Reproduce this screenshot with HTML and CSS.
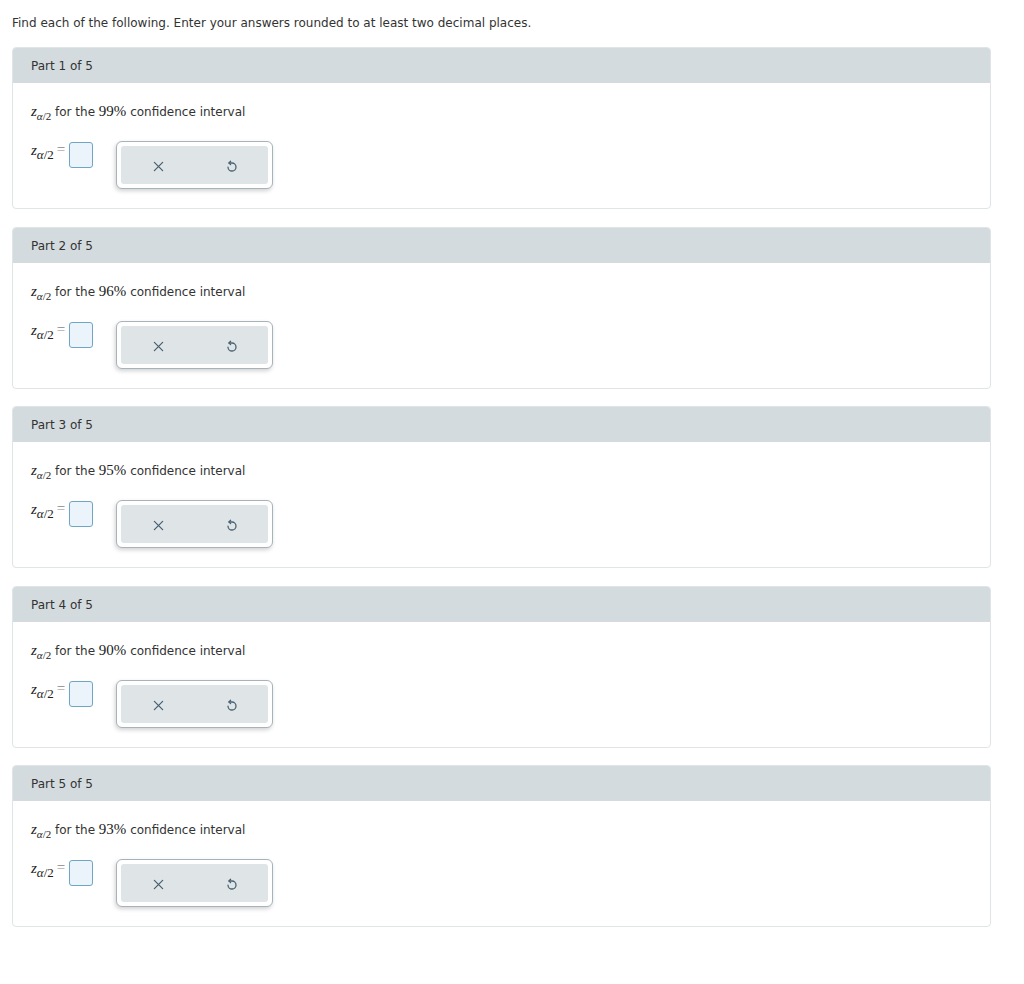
FILE: index.html
```html
<!DOCTYPE html>
<html lang="en">
<head>
    <meta charset="UTF-8">
    <title>Confidence Interval Critical Values</title>
    <link rel="stylesheet" href="styles.css">
</head>
<body>
    <div class="page">
        <p class="intro">Find each of the following. Enter your answers rounded to at least two decimal places.</p>

        <div class="part">
            <div class="part-header">Part 1 of 5</div>
            <div class="part-body">
                <p class="question"><span class="math"><i>z</i><sub><i>α</i>/2</sub></span> for the <span class="num">99%</span> confidence interval</p>
                <div class="answer-row">
                    <span class="eq"><i>z</i><sub><i>α</i>/2</sub><span class="equals">=</span></span>
                    <span class="answer-box"></span>
                    <div class="tools">
                        <div class="tools-inner">
                            <button class="tool-btn" title="Clear">
                                <svg width="11" height="11" viewBox="0 0 12 12" fill="none" stroke="currentColor" stroke-width="1.4" stroke-linecap="round"><path d="M1.5 1.5 L10.5 10.5 M10.5 1.5 L1.5 10.5"/></svg>
                            </button>
                            <button class="tool-btn" title="Undo">
                                <svg width="12" height="13" viewBox="0 0 12 13" fill="none" stroke="currentColor" stroke-width="1.3" stroke-linecap="round" stroke-linejoin="round"><path d="M4.6 1.3 L3 3 L4.6 4.6"/><path d="M3 3 H6 A4 4 0 1 1 2 7.2"/></svg>
                            </button>
                        </div>
                    </div>
                </div>
            </div>
        </div>

        <div class="part">
            <div class="part-header">Part 2 of 5</div>
            <div class="part-body">
                <p class="question"><span class="math"><i>z</i><sub><i>α</i>/2</sub></span> for the <span class="num">96%</span> confidence interval</p>
                <div class="answer-row">
                    <span class="eq"><i>z</i><sub><i>α</i>/2</sub><span class="equals">=</span></span>
                    <span class="answer-box"></span>
                    <div class="tools">
                        <div class="tools-inner">
                            <button class="tool-btn" title="Clear">
                                <svg width="11" height="11" viewBox="0 0 12 12" fill="none" stroke="currentColor" stroke-width="1.4" stroke-linecap="round"><path d="M1.5 1.5 L10.5 10.5 M10.5 1.5 L1.5 10.5"/></svg>
                            </button>
                            <button class="tool-btn" title="Undo">
                                <svg width="12" height="13" viewBox="0 0 12 13" fill="none" stroke="currentColor" stroke-width="1.3" stroke-linecap="round" stroke-linejoin="round"><path d="M4.6 1.3 L3 3 L4.6 4.6"/><path d="M3 3 H6 A4 4 0 1 1 2 7.2"/></svg>
                            </button>
                        </div>
                    </div>
                </div>
            </div>
        </div>

        <div class="part">
            <div class="part-header">Part 3 of 5</div>
            <div class="part-body">
                <p class="question"><span class="math"><i>z</i><sub><i>α</i>/2</sub></span> for the <span class="num">95%</span> confidence interval</p>
                <div class="answer-row">
                    <span class="eq"><i>z</i><sub><i>α</i>/2</sub><span class="equals">=</span></span>
                    <span class="answer-box"></span>
                    <div class="tools">
                        <div class="tools-inner">
                            <button class="tool-btn" title="Clear">
                                <svg width="11" height="11" viewBox="0 0 12 12" fill="none" stroke="currentColor" stroke-width="1.4" stroke-linecap="round"><path d="M1.5 1.5 L10.5 10.5 M10.5 1.5 L1.5 10.5"/></svg>
                            </button>
                            <button class="tool-btn" title="Undo">
                                <svg width="12" height="13" viewBox="0 0 12 13" fill="none" stroke="currentColor" stroke-width="1.3" stroke-linecap="round" stroke-linejoin="round"><path d="M4.6 1.3 L3 3 L4.6 4.6"/><path d="M3 3 H6 A4 4 0 1 1 2 7.2"/></svg>
                            </button>
                        </div>
                    </div>
                </div>
            </div>
        </div>

        <div class="part">
            <div class="part-header">Part 4 of 5</div>
            <div class="part-body">
                <p class="question"><span class="math"><i>z</i><sub><i>α</i>/2</sub></span> for the <span class="num">90%</span> confidence interval</p>
                <div class="answer-row">
                    <span class="eq"><i>z</i><sub><i>α</i>/2</sub><span class="equals">=</span></span>
                    <span class="answer-box"></span>
                    <div class="tools">
                        <div class="tools-inner">
                            <button class="tool-btn" title="Clear">
                                <svg width="11" height="11" viewBox="0 0 12 12" fill="none" stroke="currentColor" stroke-width="1.4" stroke-linecap="round"><path d="M1.5 1.5 L10.5 10.5 M10.5 1.5 L1.5 10.5"/></svg>
                            </button>
                            <button class="tool-btn" title="Undo">
                                <svg width="12" height="13" viewBox="0 0 12 13" fill="none" stroke="currentColor" stroke-width="1.3" stroke-linecap="round" stroke-linejoin="round"><path d="M4.6 1.3 L3 3 L4.6 4.6"/><path d="M3 3 H6 A4 4 0 1 1 2 7.2"/></svg>
                            </button>
                        </div>
                    </div>
                </div>
            </div>
        </div>

        <div class="part">
            <div class="part-header">Part 5 of 5</div>
            <div class="part-body">
                <p class="question"><span class="math"><i>z</i><sub><i>α</i>/2</sub></span> for the <span class="num">93%</span> confidence interval</p>
                <div class="answer-row">
                    <span class="eq"><i>z</i><sub><i>α</i>/2</sub><span class="equals">=</span></span>
                    <span class="answer-box"></span>
                    <div class="tools">
                        <div class="tools-inner">
                            <button class="tool-btn" title="Clear">
                                <svg width="11" height="11" viewBox="0 0 12 12" fill="none" stroke="currentColor" stroke-width="1.4" stroke-linecap="round"><path d="M1.5 1.5 L10.5 10.5 M10.5 1.5 L1.5 10.5"/></svg>
                            </button>
                            <button class="tool-btn" title="Undo">
                                <svg width="12" height="13" viewBox="0 0 12 13" fill="none" stroke="currentColor" stroke-width="1.3" stroke-linecap="round" stroke-linejoin="round"><path d="M4.6 1.3 L3 3 L4.6 4.6"/><path d="M3 3 H6 A4 4 0 1 1 2 7.2"/></svg>
                            </button>
                        </div>
                    </div>
                </div>
            </div>
        </div>
    </div>
</body>
</html>
```

FILE: styles.css
```css
* {
    margin: 0;
    padding: 0;
    box-sizing: border-box;
}

body {
    background: white;
    font-family: 'DejaVu Sans', Verdana, sans-serif;
    font-size: 12px;
    color: #333;
}

.page {
    width: 979px;
    margin-left: 12px;
    padding-top: 15px;
}

.intro {
    line-height: 16px;
    margin-bottom: 16px;
}

.part {
    height: 162px;
    border: 1px solid #dfe4e7;
    border-radius: 4px;
    margin-bottom: 17.5px;
    overflow: hidden;
}

.part-header {
    background: #d4dbdf;
    height: 35px;
    line-height: 36px;
    padding-left: 18px;
}

.part-body {
    padding: 20px 18px 19px;
}

.question {
    line-height: 16px;
    height: 16px;
    margin-bottom: 22px;
}

.math i,
.num {
    font-family: 'Liberation Serif', 'Times New Roman', serif;
    font-size: 15px;
    color: #222;
}

sub {
    font-size: 11px;
    vertical-align: -4px;
    line-height: 0;
    font-family: 'Liberation Serif', 'Times New Roman', serif;
    color: #222;
}

.math sub i {
    font-size: 11px;
}

.answer-row {
    display: flex;
    align-items: flex-start;
}

.eq {
    margin-top: 0;
    line-height: 16px;
    white-space: nowrap;
    font-family: 'Liberation Serif', 'Times New Roman', serif;
    color: #222;
}

.eq > i {
    font-size: 15px;
}

.eq sub,
.eq sub i {
    font-size: 13px;
}

.equals {
    color: #888;
    font-size: 15px;
    margin-left: 3px;
    vertical-align: 1px;
}

.answer-box {
    width: 24px;
    height: 26px;
    margin-left: 4px;
    margin-top: 1px;
    border: 1px solid #6fa6c4;
    border-radius: 3px;
    background: #eaf4fa;
}

.tools {
    margin-left: 23px;
    width: 157px;
    height: 48px;
    padding: 4px;
    background: white;
    border: 1px solid #a7b3ba;
    border-radius: 6px;
    box-shadow: -1px 2px 4px rgba(0, 0, 0, 0.18);
}

.tools-inner {
    display: flex;
    height: 100%;
    background: #dfe4e7;
    border-radius: 3px;
}

.tool-btn {
    flex: 1;
    display: flex;
    align-items: center;
    justify-content: center;
    padding-top: 3px;
    background: none;
    border: none;
    color: #4a6273;
    cursor: pointer;
}
```
